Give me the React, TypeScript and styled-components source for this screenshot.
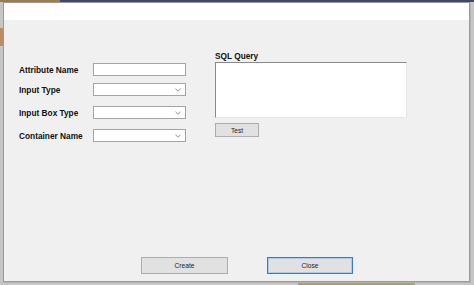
import styled, { createGlobalStyle } from 'styled-components';

const GlobalStyle = createGlobalStyle`
  html, body {
    margin: 0;
    padding: 0;
    width: 474px;
    height: 285px;
    overflow: hidden;
    font-family: "Liberation Sans", Arial, sans-serif;
  }
`;

const Desktop = styled.div`
  width: 474px;
  height: 285px;
  box-sizing: border-box;
  padding: 2px 4px 3px 3px;
  display: flex;
  background:
    linear-gradient(to right, #9c7c4c 0 60px, #3b4868 60px) top / 100% 2px no-repeat,
    linear-gradient(to right, transparent 0 298px, #b89a6e 298px 415px, transparent 415px) bottom / 100% 3px no-repeat,
    linear-gradient(to bottom, transparent 0 28px, #b58d66 28px 46px, transparent 46px) left / 3px 100% no-repeat,
    #c6c6c6;
`;

const Window = styled.div`
  flex: 1;
  display: flex;
  flex-direction: column;
  border: 1px solid #9a9a9a;
  box-shadow: 1px 1px 0 #b3b3b3;
  background: #f0f0f0;
`;

const TitleBar = styled.div`
  height: 17px;
  background: #ffffff;
`;

const Client = styled.div`
  flex: 1;
  display: flex;
  flex-direction: column;
  padding: 31px 0 7px 15px;
`;

const Content = styled.div`
  display: flex;
  gap: 29px;
`;

const Form = styled.div`
  display: flex;
  flex-direction: column;
  padding-top: 12px;
`;

const Row = styled.div<{ $gap: number }>`
  display: flex;
  align-items: center;
  margin-top: ${(p) => p.$gap}px;
  height: 13px;
`;

const Label = styled.label`
  width: 74px;
  font-size: 8.3px;
  font-weight: bold;
  color: #111;
  white-space: nowrap;
`;

const TextBox = styled.div`
  width: 93px;
  height: 13px;
  box-sizing: border-box;
  border: 1px solid #a5a5a5;
  background: #fff;
`;

const Combo = styled(TextBox)`
  display: flex;
  align-items: center;
  justify-content: flex-end;
  padding-right: 4px;
`;

const SqlPanel = styled.div`
  display: flex;
  flex-direction: column;
`;

const SqlLabel = styled(Label)`
  width: auto;
  line-height: 10px;
  margin-bottom: 1px;
`;

const QueryBox = styled.div`
  width: 192px;
  height: 56px;
  box-sizing: border-box;
  border: 1px solid #e6e6e6;
  border-top-color: #8a8a8a;
  border-left-color: #8a8a8a;
  background: #fff;
`;

const Button = styled.button<{ $focused?: boolean }>`
  box-sizing: border-box;
  padding: 0;
  font-family: "Liberation Sans", Arial, sans-serif;
  font-size: 6.6px;
  color: #222;
  background: #e1e1e1;
  border: 1px solid ${(p) => (p.$focused ? '#2f7fd0' : '#adadad')};
  box-shadow: ${(p) => (p.$focused ? 'inset 0 0 0 1px #a8cbee' : 'none')};
`;

const TestButton = styled(Button)`
  width: 44px;
  height: 14px;
  margin-top: 5px;
`;

const Footer = styled.div`
  margin-top: auto;
  display: flex;
  gap: 39px;
  padding-left: 122px;
`;

const FooterButton = styled(Button)<{ $width: number }>`
  width: ${(p) => p.$width}px;
  height: 17px;
`;

const Chevron = () => (
  <svg width="6" height="4" viewBox="0 0 6 4">
    <path d="M0.5 0.8 L3 3.2 L5.5 0.8" fill="none" stroke="#777" strokeWidth="0.8" />
  </svg>
);

const fields = [
  { label: 'Attribute Name', combo: false, gap: 0 },
  { label: 'Input Type', combo: true, gap: 7 },
  { label: 'Input Box Type', combo: true, gap: 10 },
  { label: 'Container Name', combo: true, gap: 10 },
];

const App = () => {
  return (
    <>
      <GlobalStyle />
      <Desktop>
        <Window>
          <TitleBar />
          <Client>
            <Content>
              <Form>
                {fields.map((f) => (
                  <Row key={f.label} $gap={f.gap}>
                    <Label>{f.label}</Label>
                    {f.combo ? (
                      <Combo>
                        <Chevron />
                      </Combo>
                    ) : (
                      <TextBox />
                    )}
                  </Row>
                ))}
              </Form>
              <SqlPanel>
                <SqlLabel>SQL Query</SqlLabel>
                <QueryBox />
                <TestButton>Test</TestButton>
              </SqlPanel>
            </Content>
            <Footer>
              <FooterButton $width={87}>Create</FooterButton>
              <FooterButton $width={86} $focused>
                Close
              </FooterButton>
            </Footer>
          </Client>
        </Window>
      </Desktop>
    </>
  );
};

export default App;
